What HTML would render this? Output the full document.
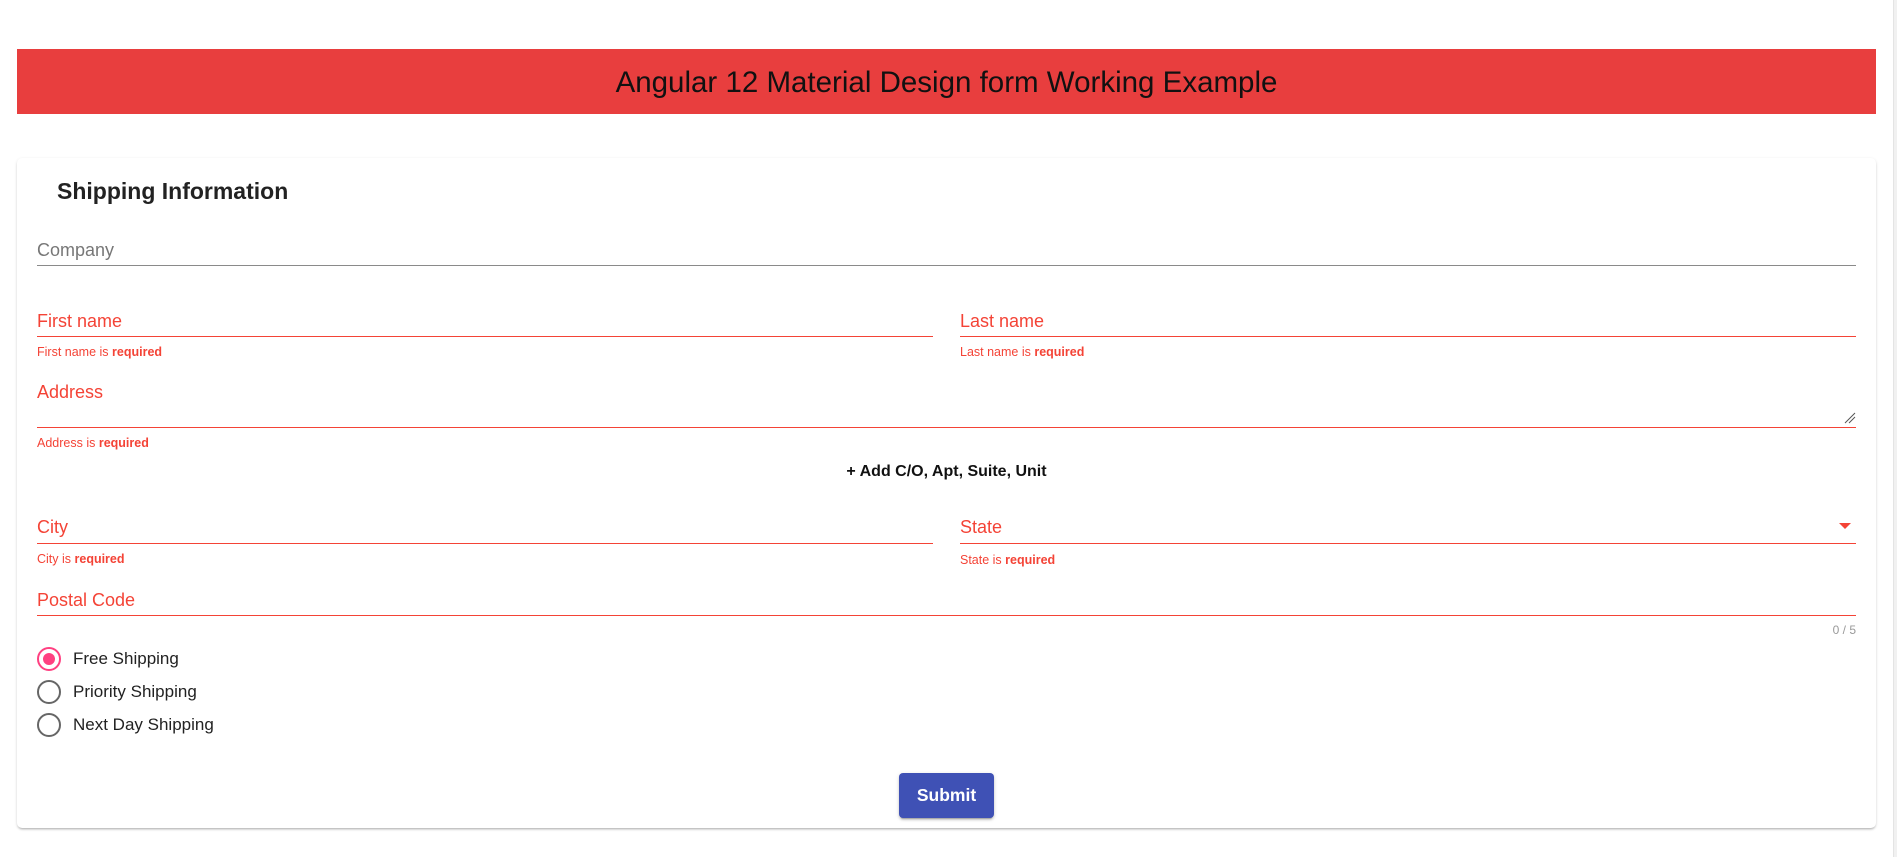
<!DOCTYPE html>
<html><head><meta charset="utf-8"><style>
*{box-sizing:border-box;margin:0;padding:0}
html,body{width:1897px;height:857px;background:#fff;overflow:hidden;font-family:"Liberation Sans",Roboto,sans-serif;}
.sb{position:absolute;left:1893px;top:0;width:4px;height:857px;background:#f1f1f1;border-left:1px solid #e4e4e4}
.hdr{position:absolute;left:17px;top:49px;width:1859px;height:65px;background:#e83e3e;color:#111;font-size:29.5px;text-align:center;line-height:67px}
.card{position:absolute;left:17px;top:158px;width:1859px;height:670px;background:#fff;border-radius:5px;box-shadow:0 2px 2px -1px rgba(0,0,0,.25),0 1px 3px rgba(0,0,0,.12)}
.t{position:absolute;font-size:19px}
.lbl{position:absolute;font-size:18px;color:#f44336}
.ln{position:absolute;height:1px;background:#f44336}
.err{position:absolute;font-size:12.5px;color:#f44336}
.err b{font-weight:bold}
.radio{position:absolute;left:37px;width:24px;height:24px;border-radius:50%;border:2px solid #666}
.radio.on{border-color:#ff4081}
.radio.on:after{content:"";position:absolute;left:4px;top:4px;width:12px;height:12px;border-radius:50%;background:#ff4081}
.rl{position:absolute;left:73px;font-size:17px;color:#222}
.btn{position:absolute;left:899px;top:773px;width:95px;height:45px;background:#3f51b5;color:#fff;border-radius:4px;font-size:17.5px;font-weight:bold;text-align:center;line-height:45px;box-shadow:0 3px 1px -2px rgba(0,0,0,.2),0 2px 2px rgba(0,0,0,.14),0 1px 5px rgba(0,0,0,.12)}
</style></head><body>
<div class="sb"></div>
<div class="hdr">Angular 12 Material Design form Working Example</div>
<div class="card"></div>
<div class="t" style="left:57px;top:178px;font-size:23px;font-weight:bold;color:#222">Shipping Information</div>

<div class="lbl" style="left:37px;top:240px;color:#777">Company</div>
<div class="ln" style="left:37px;top:265px;width:1819px;background:#8a8a8a"></div>

<div class="lbl" style="left:37px;top:311px">First name</div>
<div class="ln" style="left:37px;top:336px;width:896px"></div>
<div class="err" style="left:37px;top:345px">First name is <b>required</b></div>
<div class="lbl" style="left:960px;top:311px">Last name</div>
<div class="ln" style="left:960px;top:336px;width:896px"></div>
<div class="err" style="left:960px;top:345px">Last name is <b>required</b></div>

<div class="lbl" style="left:37px;top:382px">Address</div>
<svg style="position:absolute;left:1844px;top:412px" width="12" height="12"><path d="M1 11L11 1M5 11L11 5" stroke="#555" stroke-width="1"/></svg>
<div class="ln" style="left:37px;top:427px;width:1819px"></div>
<div class="err" style="left:37px;top:436px">Address is <b>required</b></div>

<div class="t" style="left:0;width:1893px;text-align:center;top:463px;font-size:16px;font-weight:bold;color:#111">+ Add C/O, Apt, Suite, Unit</div>

<div class="lbl" style="left:37px;top:517px">City</div>
<div class="ln" style="left:37px;top:543px;width:896px"></div>
<div class="err" style="left:37px;top:552px">City is <b>required</b></div>
<div class="lbl" style="left:960px;top:517px">State</div>
<svg style="position:absolute;left:1839px;top:523px" width="12" height="7"><path d="M0 0H12L6 6Z" fill="#f44336"/></svg>
<div class="ln" style="left:960px;top:543px;width:896px"></div>
<div class="err" style="left:960px;top:553px">State is <b>required</b></div>

<div class="lbl" style="left:37px;top:590px">Postal Code</div>
<div class="ln" style="left:37px;top:615px;width:1819px"></div>
<div class="err" style="left:1800px;width:56px;text-align:right;top:623px;color:#999;font-size:12px">0 / 5</div>

<div class="radio on" style="top:647px"></div><div class="rl" style="top:649px">Free Shipping</div>
<div class="radio" style="top:680px"></div><div class="rl" style="top:682px">Priority Shipping</div>
<div class="radio" style="top:713px"></div><div class="rl" style="top:715px">Next Day Shipping</div>

<div class="btn">Submit</div>
</body></html>
